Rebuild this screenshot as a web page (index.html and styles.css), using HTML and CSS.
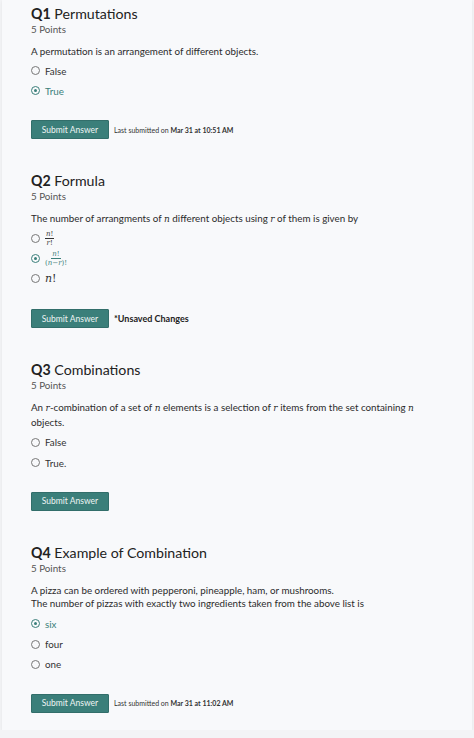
FILE: index.html
```html
<!DOCTYPE html>
<html lang="en">
<head>
    <meta charset="UTF-8">
    <meta name="viewport" content="width=device-width, initial-scale=1.0">
    <title>Assignment</title>
    <link rel="stylesheet" href="styles.css">
</head>
<body>
    <div class="sheet">
        <!-- Q1 -->
        <section class="question">
            <h2 class="q-title"><b>Q1</b> Permutations</h2>
            <div class="q-points">5 Points</div>
            <p class="q-prompt">A permutation is an arrangement of different objects.</p>
            <ul class="options">
                <li class="option"><span class="radio"></span>False</li>
                <li class="option selected"><span class="radio"></span>True</li>
            </ul>
            <div class="actions">
                <button class="submit">Submit Answer</button>
                <span class="status">Last submitted on <b>Mar 31 at 10:51 AM</b></span>
            </div>
        </section>

        <!-- Q2 -->
        <section class="question">
            <h2 class="q-title"><b>Q2</b> Formula</h2>
            <div class="q-points">5 Points</div>
            <p class="q-prompt">The number of arrangments of <i class="m">n</i> different objects using <i class="m">r</i> of them is given by</p>
            <ul class="options math-opts">
                <li class="option"><span class="radio"></span>
                    <span class="frac"><span class="num"><i class="m">n</i>!</span><span class="den"><i class="m">r</i>!</span></span>
                </li>
                <li class="option selected"><span class="radio"></span>
                    <span class="frac"><span class="num"><i class="m">n</i>!</span><span class="den">(<i class="m">n</i>&minus;<i class="m">r</i>)!</span></span>
                </li>
                <li class="option"><span class="radio"></span><span class="big-m"><i class="m">n</i>!</span></li>
            </ul>
            <div class="actions">
                <button class="submit">Submit Answer</button>
                <span class="unsaved">*Unsaved Changes</span>
            </div>
        </section>

        <!-- Q3 -->
        <section class="question">
            <h2 class="q-title"><b>Q3</b> Combinations</h2>
            <div class="q-points">5 Points</div>
            <p class="q-prompt two-line">An <i class="m">r</i>-combination of a set of <i class="m">n</i> elements is a selection of <i class="m">r</i> items from the set containing <i class="m">n</i> objects.</p>
            <ul class="options">
                <li class="option"><span class="radio"></span>False</li>
                <li class="option"><span class="radio"></span>True.</li>
            </ul>
            <div class="actions">
                <button class="submit">Submit Answer</button>
            </div>
        </section>

        <!-- Q4 -->
        <section class="question">
            <h2 class="q-title"><b>Q4</b> Example of Combination</h2>
            <div class="q-points">5 Points</div>
            <p class="q-prompt two-line">A pizza can be ordered with pepperoni, pineapple, ham, or mushrooms.<br>The number of pizzas with exactly two ingredients taken from the above list is</p>
            <ul class="options">
                <li class="option selected"><span class="radio"></span>six</li>
                <li class="option"><span class="radio"></span>four</li>
                <li class="option"><span class="radio"></span>one</li>
            </ul>
            <div class="actions">
                <button class="submit">Submit Answer</button>
                <span class="status">Last submitted on <b>Mar 31 at 11:02 AM</b></span>
            </div>
        </section>
    </div>
</body>
</html>
```

FILE: styles.css
```css
body
{
    margin: 0;
    background: #f3f4f6;
    font-family: Lato, "Open Sans", sans-serif;
    color: #2b2b2b;
}
.sheet
{
    margin: 0 2px;
    padding: 6px 0 17px 29px;
    background: #f8f9fb;
    box-shadow: 0 1px 3px rgba(0, 0, 0, .07);
}
.question
{
    padding-bottom: 34px;
}
.question:last-child
{
    padding-bottom: 0;
}
.q-title
{
    margin: 0;
    font-size: 14.2px;
    line-height: 16px;
    font-weight: normal;
    color: #222;
}
.q-title b
{
    font-weight: bold;
}
.q-points
{
    font-size: 9.8px;
    line-height: 13px;
    color: #555;
    margin-top: 1px;
}
.q-prompt
{
    margin: 9px 0 0;
    font-size: 9.8px;
    line-height: 13.5px;
    padding-right: 40px;
    color: #2b2b2b;
}
.q-prompt.two-line
{
    margin-bottom: 3px;
}
.m
{
    font-family: "DejaVu Serif", "Liberation Serif", serif;
    font-style: italic;
    font-size: 9px;
}
.options
{
    list-style: none;
    margin: 2px 0 0;
    padding: 0;
}
.option
{
    display: flex;
    align-items: center;
    height: 20.3px;
    font-size: 9.8px;
    color: #333;
}
.option.selected
{
    color: #3b7f7a;
}
.radio
{
    width: 7px;
    height: 7px;
    border: 1px solid #777;
    border-radius: 50%;
    margin-right: 5px;
    position: relative;
    flex: none;
}
.selected .radio
{
    border: 1.4px solid #3b7f7a;
}
.selected .radio::after
{
    content: "";
    position: absolute;
    width: 3px;
    height: 3px;
    left: 50%;
    top: 50%;
    margin: -1.5px 0 0 -1.5px;
    border-radius: 50%;
    background: #3b7f7a;
}
.math-opts .option:nth-child(1)
{
    height: 20px;
}
.math-opts .option:nth-child(2)
{
    height: 19px;
}
.math-opts .option:nth-child(3)
{
    height: 22.5px;
}
.frac
{
    display: inline-flex;
    flex-direction: column;
    align-items: center;
    font-family: "DejaVu Serif", serif;
    font-size: 7px;
    line-height: 8px;
}
.frac .m
{
    font-size: 7px;
}
.frac .num
{
    border-bottom: 0.7px solid currentColor;
    padding: 0 1px;
}
.big-m
{
    font-family: "DejaVu Serif", serif;
    font-size: 11px;
}
.big-m .m
{
    font-size: 11px;
}
.actions
{
    display: flex;
    align-items: center;
    gap: 5px;
    margin-top: 19px;
}
.submit
{
    width: 78px;
    height: 19px;
    padding: 0;
    border: 1px solid #326e6a;
    border-radius: 1px;
    background: #3b7f7a;
    color: #eef5f4;
    font-family: Lato, sans-serif;
    font-size: 8.5px;
}
.status
{
    font-size: 7px;
    color: #333;
}
.unsaved
{
    font-size: 9px;
    font-weight: bold;
    color: #222;
}
```
